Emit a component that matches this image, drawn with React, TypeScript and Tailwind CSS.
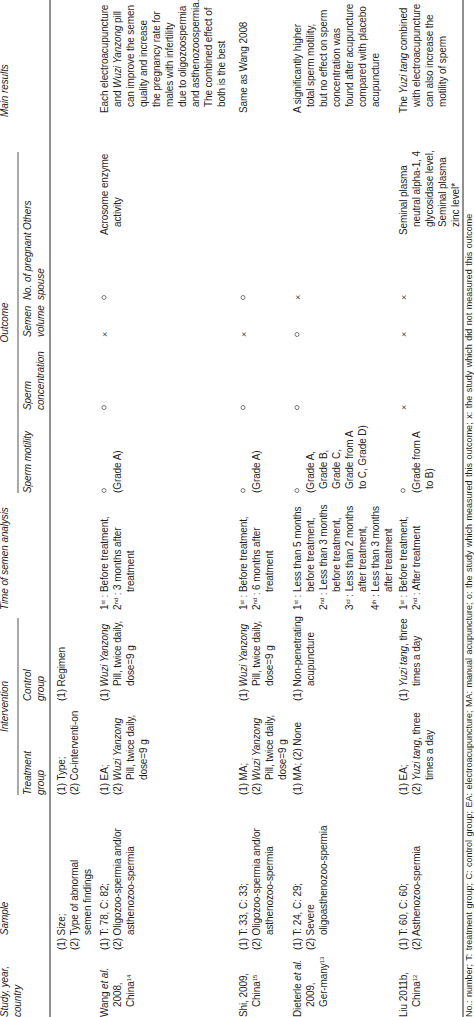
import React from 'react';

type Line = [React.ReactNode, number?];

// hanging indents used in the cells
const IND: Record<number, string> = {
  0: '',
  4: 'pl-[4px]',
  5: 'pl-[5px]',
  8: 'pl-[8px]',
  10: 'pl-[10px]',
  15: 'pl-[15px]',
  18: 'pl-[18px]',
};

const COLS =
  'grid grid-cols-[67px_155px_94px_91px_117px_83px_73px_37px_65px_118px_140px]';

const Lines = ({ lines, className = '' }: { lines: Line[]; className?: string }) => (
  <div className={className}>
    {lines.map(([t, i], k) => (
      <div key={k} className={`whitespace-nowrap ${IND[i ?? 0]}`}>
        {t}
      </div>
    ))}
  </div>
);

const O = () => (
  <span className="inline-block h-[5px] w-[5px] rounded-full border border-[#777] align-[1px]" />
);
const X = () => <span className="text-[9px] text-[#333]">×</span>;

const st = <sup className="text-[6px]">st</sup>;
const nd = <sup className="text-[6px]">nd</sup>;
const rd = <sup className="text-[6px]">rd</sup>;
const th = <sup className="text-[6px]">th</sup>;
const ref = (n: number) => <sup className="text-[6px]">{n}</sup>;

const wuzi: Line[] = [
  [<>(1) <i>Wuzi Yanzong</i></>],
  ['Pill, twice daily,', 15],
  ['dose=9 g', 15],
];

type Row = {
  pad: string;
  cells: Line[][];
};

const rows: Row[] = [
  {
    pad: 'pt-[4px] pb-[5px]',
    cells: [
      [[<>Wang <i>et al.</i></>], ['2008,', 10], [<>China{ref(14)}</>, 10]],
      [['(1) T: 78, C: 82;'], ['(2) Oligozoo-spermia and/or'], ['asthenozoo-spermia', 15]],
      [['(1) EA;'], [<>(2) <i>Wuzi Yanzong</i></>], ['Pill, twice daily,', 15], ['dose=9 g', 15]],
      wuzi,
      [[<>1{st} : Before treatment,</>], [<>2{nd} : 3 months after</>], ['treatment', 18]],
      [[<O />], ['(Grade A)']],
      [[<O />]],
      [[<X />]],
      [[<O />]],
      [['Acrosome enzyme'], ['activity', 8]],
      [
        ['Each electroacupuncture', 4],
        [<>and <i>Wuzi Yanzong</i> pill</>, 10],
        ['can improve the semen', 10],
        ['quality and increase', 10],
        ['the pregnancy rate for', 10],
        ['males with infertility', 10],
        ['due to oligozoospermia', 10],
        ['and asthenozoospermia.', 10],
        ['The combined effect of', 10],
        ['both is the best', 10],
      ],
    ],
  },
  {
    pad: 'pt-[4px]',
    cells: [
      [['Shi, 2009,'], [<>China{ref(15)}</>, 10]],
      [['(1) T: 33, C: 33;'], ['(2) Oligozoo-spermia and/or'], ['asthenozoo-spermia', 15]],
      [['(1) MA;'], [<>(2) <i>Wuzi Yanzong</i></>], ['Pill, twice daily,', 15], ['dose=9 g', 15]],
      wuzi,
      [[<>1{st} : Before treatment,</>], [<>2{nd} : 6 months after</>], ['treatment', 18]],
      [[<O />], ['(Grade A)']],
      [[<O />]],
      [[<X />]],
      [[<O />]],
      [],
      [['Same as Wang 2008', 4]],
    ],
  },
  {
    pad: 'pt-[2px]',
    cells: [
      [[<>Dieterle <i>et al.</i></>], ['2009,', 10], [<>Ger-many{ref(13)}</>, 10]],
      [['(1) T: 24, C: 29;'], ['(2) Severe'], ['oligoasthenozoo-spermia', 15]],
      [['(1) MA; (2) None']],
      [['(1) Non-penetrating'], ['acupuncture', 15]],
      [
        [<>1{st} : Less than 5 months</>],
        ['before treatment,', 18],
        [<>2{nd} : Less than 3 months</>],
        ['before treatment,', 18],
        [<>3{rd} : Less than 2 months</>],
        ['after treatment,', 18],
        [<>4{th} : Less than 3 months</>],
        ['after treatment', 18],
      ],
      [[<O />], ['(Grade A,'], ['Grade B,', 4], ['Grade C,', 4], ['Grade from A', 4], ['to C, Grade D)', 4]],
      [[<O />]],
      [[<O />]],
      [[<X />]],
      [],
      [
        ['A significantly higher', 4],
        ['total sperm motility,', 10],
        ['but no effect on sperm', 10],
        ['concentration was', 10],
        ['found after acupuncture', 10],
        ['compared with placebo', 10],
        ['acupuncture', 10],
      ],
    ],
  },
  {
    pad: 'pt-[2px] pb-[1px]',
    cells: [
      [['Liu 2011b,'], [<>China{ref(12)}</>, 10]],
      [['(1) T: 60, C: 60;'], ['(2) Asthenozoo-spermia']],
      [['(1) EA;'], [<>(2) <i>Yuzi tang</i>, three</>], ['times a day', 15]],
      [[<>(1) <i>Yuzi tang</i>, three</>], ['times a day', 15]],
      [[<>1{st} : Before treatment,</>], [<>2{nd} : After treatment</>]],
      [[<O />], ['(Grade from A'], ['to B)', 4]],
      [[<X />]],
      [[<X />]],
      [[<X />]],
      [
        ['Seminal plasma'],
        ['neutral alpha-1, 4', 8],
        ['glycosidase level,', 8],
        ['Seminal plasma', 8],
        ['zinc level*', 8],
      ],
      [
        [<>The <i>Yuzi tang</i> combined</>, 4],
        ['with electroacupuncture', 10],
        ['can also increase the', 10],
        ['motility of sperm', 10],
      ],
    ],
  },
];

export default function App() {
  return (
    <div className="h-[1017px] w-[474px] overflow-hidden bg-white">
      <div className="w-[1040px] origin-top-left -rotate-90 translate-x-[-2.5px] translate-y-[1017px] font-['Liberation_Sans',Arial,sans-serif] text-[10px] leading-[13px] tracking-[-0.1px] text-[#1e1e1e]">
        {/* column heads */}
        <div className={`${COLS} grid-rows-[auto_auto] italic`}>
          <Lines className="row-span-2" lines={[['Study, year,'], ['country']]} />
          <Lines className="row-span-2" lines={[['Sample', 15]]} />
          <div className="col-span-2">
            <div className="mr-[8px] border-b border-[#555] pb-[6.5px] text-center">Intervention</div>
          </div>
          <Lines className="row-span-2" lines={[['Time of semen analysis']]} />
          <div className="col-span-5">
            <div className="mr-[35px] border-b border-[#555] pb-[6.5px] text-center">Outcome</div>
          </div>
          <Lines className="row-span-2" lines={[['Main results']]} />
          <Lines className="pt-[2.2px] pb-[3.3px]" lines={[['Treatment'], ['group']]} />
          <Lines className="pt-[2.2px]" lines={[['Control'], ['group']]} />
          <Lines className="pt-[2.2px]" lines={[['Sperm motility']]} />
          <Lines className="pt-[2.2px]" lines={[['Sperm'], ['concentration']]} />
          <Lines className="pt-[2.2px]" lines={[['Semen'], ['volume']]} />
          <Lines className="pt-[2.2px]" lines={[['No. of pregnant'], ['spouse']]} />
          <Lines className="pt-[2.2px]" lines={[['Others', 5]]} />
        </div>
        <div className="h-[1.5px] w-[1040px] bg-[#222]" />

        {/* what each column reports */}
        <div className={`${COLS} pt-[3.2px]`}>
          <div />
          <Lines lines={[['(1) Size;'], ['(2) Type of abnormal'], ['semen findings', 15]]} />
          <Lines lines={[['(1) Type;'], ['(2) Co-interventi-on']]} />
          <Lines lines={[['(1) Regimen']]} />
        </div>

        {rows.map((r, k) => (
          <div key={k} className={`${COLS} ${r.pad}`}>
            {r.cells.map((c, j) => (
              <Lines key={j} lines={c} />
            ))}
          </div>
        ))}

        <div className="h-[1.5px] w-[1040px] bg-[#222]" />
        <div className="whitespace-nowrap text-[9px] leading-[10px] tracking-normal [word-spacing:1px]">
          No.: number; T: treatment group; C: control group; EA: electroacupuncture; MA: manual acupuncture; o: the
          study which measured this outcome; x: the study which did not measured this outcome
        </div>
      </div>
    </div>
  );
}
